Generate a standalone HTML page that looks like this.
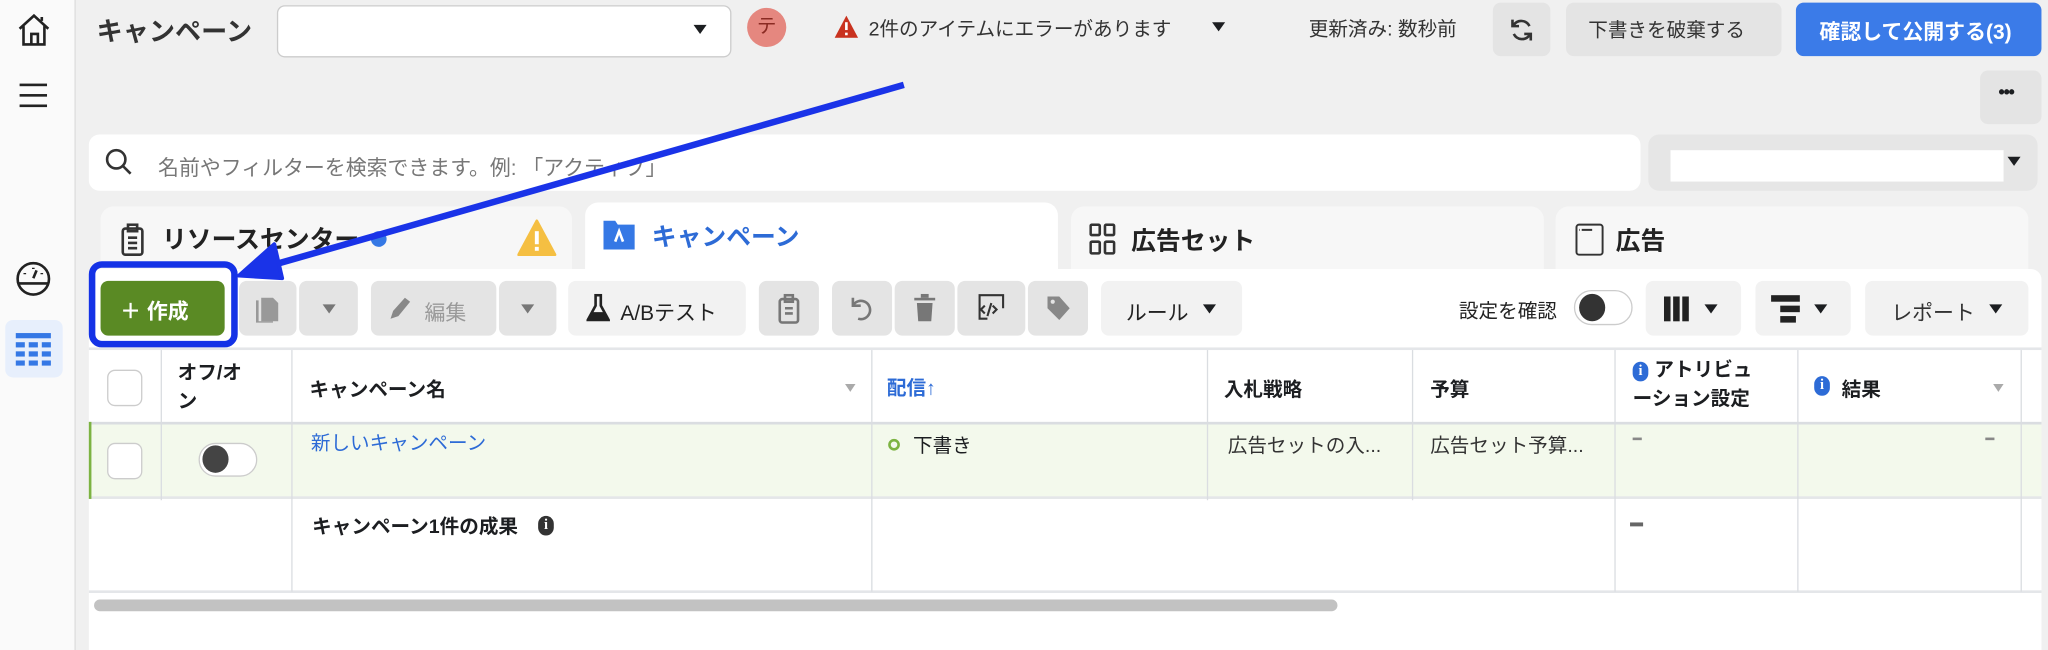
<!DOCTYPE html>
<html><head><meta charset="utf-8"><style>
*{box-sizing:border-box;margin:0;padding:0}
body{width:2048px;height:650px;overflow:hidden;background:#f0f0f0;font-family:"Liberation Sans","Noto Sans CJK JP",sans-serif;color:#1c1e21}
#s{position:absolute;left:0;top:0;width:1568px;height:498px;transform:scale(1.30612);transform-origin:0 0;background:#f0f0f0}
.a{position:absolute}
.btn{position:absolute;background:#e4e4e4;border-radius:6px}
.lt{background:#f2f2f2}
.t{position:absolute;white-space:nowrap}
.tri{display:block;width:0;height:0;border-left:5px solid transparent;border-right:5px solid transparent;border-top:7px solid #1c1e21}
.vl{position:absolute;top:268px;width:1px;height:185px;background:#dadde1}
.inf{position:absolute;width:12px;height:15px;border-radius:6px;background:#2d6bd6;color:#fff;font-size:11px;font-weight:bold;text-align:center;line-height:15px;font-family:"Liberation Serif",serif}
</style></head><body><div id="s">
<div class="a" style="left:0;top:0;width:58px;height:498px;background:#fafafa;border-right:1px solid #ddd"></div>
<svg class="a" style="left:12px;top:9px" width="28" height="28" viewBox="0 0 28 28" fill="none" stroke="#222" stroke-width="2"><path d="M3 13 L14 3 L25 13 M6 11 V25 H22 V11 M12 25 V17 H17 V25 M20 7 V4"/></svg>
<div class="a" style="left:15px;top:64px;width:21px;height:2px;background:#222;box-shadow:0 8px 0 #222,0 16px 0 #222"></div>
<svg class="a" style="left:11px;top:199px" width="29" height="29" viewBox="0 0 29 29" fill="none" stroke="#222" stroke-width="2"><circle cx="14.5" cy="14.5" r="12"/><path d="M3 18 H26 M14.5 14 L17 8 M8 10 v1 M21 10 v1 M14.5 6 v1"/></svg>
<div class="a" style="left:4px;top:245px;width:44px;height:44px;background:#e7effc;border-radius:6px"></div>
<svg class="a" style="left:12px;top:255px" width="27" height="25"><rect x="0" y="0" width="27" height="4" fill="#3578e5"/><g fill="#3578e5"><rect x="0" y="7" width="7" height="4"/><rect x="10" y="7" width="7" height="4"/><rect x="20" y="7" width="7" height="4"/><rect x="0" y="14" width="7" height="4"/><rect x="10" y="14" width="7" height="4"/><rect x="20" y="14" width="7" height="4"/><rect x="0" y="21" width="7" height="4"/><rect x="10" y="21" width="7" height="4"/><rect x="20" y="21" width="7" height="4"/></g></svg>
<div class="t" style="left:74px;top:8px;font-size:20px;font-weight:bold;color:#333">キャンペーン</div>
<div class="a" style="left:212px;top:4px;width:348px;height:40px;background:#fff;border:1px solid #ccc;border-radius:6px"></div>
<div class="a" style="left:531px;top:19px"><span class="tri"></span></div>
<div class="a" style="left:572px;top:6px;width:30px;height:30px;border-radius:50%;background:#e5877f;color:#8a2a22;font-size:15px;text-align:center;line-height:30px">テ</div>
<svg class="a" style="left:639px;top:12px" width="18" height="17"><path d="M9 0 L18 17 H0Z" fill="#c9321f"/><rect x="8" y="5" width="2" height="6" fill="#fff"/><rect x="8" y="13" width="2" height="2" fill="#fff"/></svg>
<div class="t" style="left:665px;top:11px;font-size:15px;color:#333">2件のアイテムにエラーがあります</div>
<div class="a" style="left:928px;top:17px"><span class="tri"></span></div>
<div class="t" style="left:1002px;top:11px;font-size:15px;color:#333">更新済み: 数秒前</div>
<div class="btn" style="left:1143px;top:2px;width:44px;height:41px"></div>
<svg class="a" style="left:1155px;top:12px" width="20" height="22" fill="none" stroke="#333" stroke-width="2"><path d="M4 14 A7 7 0 0 0 16 15 M16 8 A7 7 0 0 0 4 7 M3 3 V8 H8 M17 19 V14 H12"/></svg>
<div class="btn" style="left:1199px;top:2px;width:165px;height:41px"></div>
<div class="t" style="left:1216px;top:12px;font-size:15px;color:#333">下書きを破棄する</div>
<div class="btn" style="left:1375px;top:2px;width:188px;height:41px;background:#3b7be8"></div>
<div class="t" style="left:1393px;top:11px;font-size:16px;font-weight:bold;color:#fff">確認して公開する(3)</div>
<div class="btn" style="left:1516px;top:54px;width:47px;height:41px"></div>
<div class="t" style="left:1530px;top:62px;font-size:14px;font-weight:bold;letter-spacing:-1px">•••</div>
<div class="a" style="left:68px;top:103px;width:1188px;height:43px;background:#fff;border-radius:8px"></div>
<svg class="a" style="left:80px;top:113px" width="22" height="22" fill="none" stroke="#333" stroke-width="2"><circle cx="9" cy="9" r="7"/><path d="M14 14 L20 20"/></svg>
<div class="t" style="left:121px;top:115px;font-size:16px;color:#777">名前やフィルターを検索できます。例: 「アクティブ」</div>
<div class="a" style="left:1262px;top:103px;width:298px;height:43px;background:#e6e6e6;border-radius:8px"></div>
<div class="a" style="left:1279px;top:115px;width:255px;height:24px;background:#fff"></div>
<div class="a" style="left:1537px;top:120px"><span class="tri"></span></div>
<div class="a" style="left:77px;top:158px;width:361px;height:60px;background:#f7f7f7;border-radius:10px"></div>
<div class="a" style="left:448px;top:155px;width:362px;height:60px;background:#fff;border-radius:10px"></div>
<div class="a" style="left:820px;top:158px;width:362px;height:60px;background:#f7f7f7;border-radius:10px"></div>
<div class="a" style="left:1191px;top:158px;width:362px;height:60px;background:#f7f7f7;border-radius:10px"></div>
<svg class="a" style="left:92px;top:171px" width="20" height="26" fill="none" stroke="#333" stroke-width="2"><rect x="2" y="4" width="15" height="20" rx="2"/><rect x="6" y="1" width="7" height="5"/><path d="M6 11h7M6 15h7M6 19h7"/></svg>
<div class="t" style="left:124px;top:169px;font-size:19px;font-weight:bold;color:#222">リソースセンター</div>
<div class="a" style="left:284px;top:177px;width:12px;height:12px;border-radius:50%;background:#3578e5"></div>
<svg class="a" style="left:396px;top:168px" width="30" height="28"><path d="M15 1 L29 27 H1Z" fill="#f5bf42" stroke="#f5bf42" stroke-linejoin="round" stroke-width="2"/><rect x="13.5" y="9" width="3" height="10" fill="#fff"/><rect x="13.5" y="21" width="3" height="3" fill="#fff"/></svg>
<svg class="a" style="left:462px;top:167px" width="24" height="24"><path d="M0 2 H9 L11 5 H24 V24 H0Z" fill="#3578e5"/><path d="M9 18 L12 10 L15 18" stroke="#fff" stroke-width="2" fill="none"/></svg>
<div class="t" style="left:499px;top:167px;font-size:19px;font-weight:bold;color:#2d6bd6">キャンペーン</div>
<svg class="a" style="left:834px;top:171px" width="20" height="24" fill="none" stroke="#333" stroke-width="2"><rect x="1" y="1" width="7" height="8" rx="1"/><rect x="12" y="1" width="7" height="8" rx="1"/><rect x="1" y="14" width="7" height="9" rx="1"/><rect x="12" y="14" width="7" height="9" rx="1"/></svg>
<div class="t" style="left:866px;top:170px;font-size:19px;font-weight:bold;color:#222">広告セット</div>
<svg class="a" style="left:1206px;top:171px" width="22" height="25" fill="none" stroke="#333" stroke-width="1.5"><rect x="1" y="1" width="20" height="23" rx="2"/><path d="M5 5 h8 M3 5h0.5"/></svg>
<div class="t" style="left:1237px;top:170px;font-size:19px;font-weight:bold;color:#222">広告</div>
<div class="a" style="left:68px;top:206px;width:1495px;height:292px;background:#fff;border-radius:8px 8px 0 0"></div>
<div class="a" style="left:448px;top:200px;width:362px;height:12px;background:#fff"></div>
<div class="btn" style="left:77px;top:215px;width:95px;height:42px;background:#5a8a24"></div>
<div class="t" style="left:92px;top:225px;font-size:16px;font-weight:bold;color:#fff">＋ 作成</div>
<div class="a" style="left:68px;top:200px;width:114px;height:66px;border:5px solid #1432e6;border-radius:10px"></div>
<div class="btn" style="left:183px;top:215px;width:44px;height:42px"></div>
<svg class="a" style="left:194px;top:225px" width="20" height="22"><path d="M6 3 H15 L19 7 V21 H6Z" fill="#999"/><path d="M3 5 V22 H15" stroke="#999" stroke-width="2" fill="none"/></svg>
<div class="btn" style="left:229px;top:215px;width:45px;height:42px"></div>
<div class="a" style="left:247px;top:233px"><span class="tri" style="border-top-color:#777"></span></div>
<div class="btn" style="left:284px;top:215px;width:96px;height:42px"></div>
<svg class="a" style="left:297px;top:226px" width="18" height="20"><path d="M2 18 L4 12 L13 2 L17 5 L8 16Z" fill="#888"/></svg>
<div class="t" style="left:325px;top:226px;font-size:16px;color:#999">編集</div>
<div class="btn" style="left:382px;top:215px;width:44px;height:42px"></div>
<div class="a" style="left:399px;top:233px"><span class="tri" style="border-top-color:#777"></span></div>
<div class="btn lt" style="left:435px;top:215px;width:136px;height:42px"></div>
<svg class="a" style="left:449px;top:225px" width="18" height="22"><path d="M6 1 H12 M7 1 V9 L1 20 H17 L11 9 V1" stroke="#222" stroke-width="2" fill="none"/><path d="M4 14 H14 L16 20 H2Z" fill="#222"/></svg>
<div class="t" style="left:475px;top:226px;font-size:16px;color:#222">A/Bテスト</div>
<div class="btn" style="left:581px;top:215px;width:46px;height:42px"></div>
<svg class="a" style="left:595px;top:225px" width="18" height="23" fill="none" stroke="#777" stroke-width="2"><rect x="2" y="4" width="14" height="18" rx="2"/><rect x="6" y="1" width="6" height="5"/><path d="M6 11h6M6 15h6"/></svg>
<div class="btn" style="left:637px;top:215px;width:46px;height:42px"></div>
<svg class="a" style="left:650px;top:226px" width="20" height="20" fill="none" stroke="#777" stroke-width="2"><path d="M3 2 V8 H9 M3 8 A7 7 0 1 1 7 18"/></svg>
<div class="btn" style="left:685px;top:215px;width:46px;height:42px"></div>
<svg class="a" style="left:699px;top:225px" width="18" height="22"><rect x="1" y="3" width="16" height="2" fill="#777"/><rect x="6" y="0" width="6" height="3" fill="#777"/><path d="M3 7 H15 L14 21 H4Z" fill="#777"/></svg>
<div class="btn" style="left:733px;top:215px;width:52px;height:42px"></div>
<svg class="a" style="left:748px;top:224px" width="22" height="22" fill="none" stroke="#333" stroke-width="1.6"><path d="M8 20 H2 V2 H20 V12 M6 10 L3 13 L6 16 M12 10 L15 13 L12 16 M11 8 L8 18"/></svg>
<div class="btn" style="left:787px;top:215px;width:46px;height:42px"></div>
<svg class="a" style="left:800px;top:225px" width="20" height="22"><path d="M2 2 H11 L19 11 L11 20 L2 11Z" fill="#888"/><circle cx="6" cy="6" r="1.6" fill="#e4e4e4"/></svg>
<div class="btn lt" style="left:843px;top:215px;width:108px;height:42px"></div>
<div class="t" style="left:862px;top:226px;font-size:16px;color:#222">ルール</div>
<div class="a" style="left:921px;top:233px"><span class="tri"></span></div>
<div class="t" style="left:1117px;top:227px;font-size:15px;color:#222">設定を確認</div>
<div class="a" style="left:1205px;top:222px;width:45px;height:27px;border:1px solid #ccc;border-radius:14px;background:#fff"></div>
<div class="a" style="left:1209px;top:225px;width:20px;height:21px;border-radius:50%;background:#333"></div>
<div class="btn lt" style="left:1260px;top:215px;width:73px;height:42px"></div>
<div class="a" style="left:1274px;top:227px;width:5px;height:19px;background:#222;box-shadow:7px 0 0 #222,14px 0 0 #222"></div>
<div class="a" style="left:1305px;top:233px"><span class="tri"></span></div>
<div class="btn lt" style="left:1344px;top:215px;width:73px;height:42px"></div>
<div class="a" style="left:1356px;top:226px;width:22px;height:5px;background:#222"></div>
<div class="a" style="left:1363px;top:234px;width:15px;height:5px;background:#222"></div>
<div class="a" style="left:1363px;top:242px;width:12px;height:5px;background:#222"></div>
<div class="a" style="left:1389px;top:233px"><span class="tri"></span></div>
<div class="btn lt" style="left:1428px;top:215px;width:125px;height:42px"></div>
<div class="t" style="left:1448px;top:226px;font-size:16px;color:#333">レポート</div>
<div class="a" style="left:1523px;top:233px"><span class="tri"></span></div>
<div class="a" style="left:68px;top:266px;width:1495px;height:2px;background:#e4e6e9"></div>
<div class="a" style="left:68px;top:323px;width:1495px;height:59px;background:#f3f9ec;border-top:2px solid #dadde1;border-bottom:2px solid #e4e6e9"></div>
<div class="a" style="left:68px;top:323px;width:2px;height:59px;background:#7cb342"></div>
<div class="a" style="left:68px;top:452px;width:1495px;height:2px;background:#e4e6e9"></div>
<div class="vl" style="left:123px;height:115px"></div>
<div class="vl" style="left:223px"></div><div class="vl" style="left:667px"></div><div class="vl" style="left:924px;height:115px"></div><div class="vl" style="left:1081px;height:115px"></div><div class="vl" style="left:1236px"></div><div class="vl" style="left:1376px"></div><div class="vl" style="left:1547px"></div>
<div class="a" style="left:82px;top:283px;width:27px;height:28px;border:1px solid #ccc;border-radius:6px;background:#fff"></div>
<div class="a" style="left:82px;top:339px;width:27px;height:28px;border:1px solid #ccc;border-radius:6px;background:#fff"></div>
<div class="t" style="left:136px;top:275px;font-size:15px;font-weight:bold;line-height:22px">オフ/オ<br>ン</div>
<div class="t" style="left:237px;top:287px;font-size:15px;font-weight:bold">キャンペーン名</div>
<div class="a" style="left:647px;top:294px"><span class="tri" style="border-top-color:#aaa;border-left-width:4px;border-right-width:4px;border-top-width:6px"></span></div>
<div class="t" style="left:679px;top:286px;font-size:15px;font-weight:bold;color:#2d6bd6">配信↑</div>
<div class="t" style="left:937px;top:287px;font-size:15px;font-weight:bold">入札戦略</div>
<div class="t" style="left:1095px;top:287px;font-size:15px;font-weight:bold">予算</div>
<div class="inf" style="left:1250px;top:277px">i</div>
<div class="t" style="left:1250px;top:273px;font-size:15px;font-weight:bold;line-height:22px">&nbsp;&nbsp;&nbsp;&nbsp;アトリビュ<br>ーション設定</div>
<div class="inf" style="left:1389px;top:288px">i</div>
<div class="t" style="left:1410px;top:287px;font-size:15px;font-weight:bold">結果</div>
<div class="a" style="left:1526px;top:294px"><span class="tri" style="border-top-color:#aaa;border-left-width:4px;border-right-width:4px;border-top-width:6px"></span></div>
<div class="a" style="left:152px;top:339px;width:45px;height:26px;border:1px solid #ccc;border-radius:13px;background:#fff"></div>
<div class="a" style="left:155px;top:341px;width:20px;height:21px;border-radius:50%;background:#444"></div>
<div class="t" style="left:238px;top:328px;font-size:15px;color:#2d6bd6">新しいキャンペーン</div>
<div class="a" style="left:680px;top:336px;width:9px;height:9px;border:2px solid #7cb342;border-radius:50%"></div>
<div class="t" style="left:699px;top:330px;font-size:15px">下書き</div>
<div class="t" style="left:940px;top:330px;font-size:15px;color:#333">広告セットの入...</div>
<div class="t" style="left:1095px;top:330px;font-size:15px;color:#333">広告セット予算...</div>
<div class="a" style="left:1250px;top:335px;width:7px;height:2px;background:#888"></div>
<div class="a" style="left:1520px;top:335px;width:7px;height:2px;background:#888"></div>
<div class="t" style="left:239px;top:392px;font-size:15px;font-weight:bold">キャンペーン1件の成果</div>
<div class="inf" style="left:412px;top:395px;background:#333">i</div>
<div class="a" style="left:1248px;top:400px;width:10px;height:3px;background:#666"></div>
<div class="a" style="left:72px;top:459px;width:952px;height:9px;border-radius:5px;background:#c2c2c2"></div>
<svg class="a" style="left:0;top:0" width="1568" height="498"><path d="M692 65 L205 204" stroke="#1a33e8" stroke-width="5"/><path d="M183 211 L210 187 L216 213Z" fill="#1a33e8" stroke="#1a33e8" stroke-width="3" stroke-linejoin="round"/></svg>
</div></body></html>
